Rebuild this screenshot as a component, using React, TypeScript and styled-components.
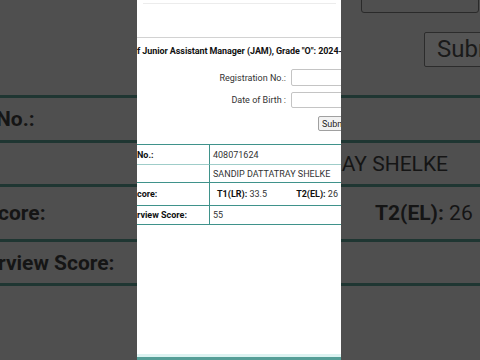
import React from "react";
import styled, { createGlobalStyle } from "styled-components";

const GlobalStyle = createGlobalStyle`
  html, body {
    margin: 0;
    padding: 0;
    background: #4f4f4f;
  }
`;

const TEAL = "#3f928b";
const DARK_TEAL = "#1f3632";

const Screen = styled.div`
  display: grid;
  grid-template-columns: 137px 204px 139px;
  width: 480px;
  height: 360px;
  overflow: hidden;
  background: #4f4f4f;
  font-family: Roboto, "Liberation Sans", sans-serif;
`;

const Backdrop = styled.div`
  display: flex;
  flex-direction: column;
  min-width: 0;
  overflow: hidden;
`;

const BackTop = styled.div`
  height: 95px;
  flex: none;
  border-bottom: 3px solid ${DARK_TEAL};
  display: flex;
  flex-direction: column;
  align-items: flex-start;
`;

const BackRow = styled.div<{ $h: number; $end?: number; $start?: number }>`
  height: ${(p) => p.$h}px;
  flex: none;
  border-bottom: 3px solid ${DARK_TEAL};
  display: flex;
  align-items: center;
  justify-content: ${(p) => (p.$end !== undefined ? "flex-end" : "flex-start")};
  padding-right: ${(p) => p.$end ?? 0}px;
  padding-left: ${(p) => p.$start ?? 0}px;
  white-space: nowrap;
  color: #151515;
  font-size: 21px;
`;

const BackLabel = styled.span<{ $shift?: number }>`
  margin-left: ${(p) => p.$shift ?? 0}px;
  font-weight: 700;
  font-size: 21px;
`;

const GhostInput = styled.div`
  margin: -9px 0 0 20px;
  width: 116px;
  height: 20px;
  flex: none;
  border: 1.5px solid #2a2a2a;
  border-radius: 3px;
`;

const GhostButton = styled.div`
  margin: 19px 0 0 83px;
  width: 70px;
  height: 35px;
  flex: none;
  box-sizing: border-box;
  border: 1.5px solid #2c2c2c;
  border-radius: 2px;
  background: #555;
  padding-left: 12px;
  font-size: 24px;
  line-height: 32px;
  color: #1a1a1a;
  white-space: nowrap;
  overflow: hidden;
`;

const Panel = styled.main`
  background: #fff;
  display: flex;
  flex-direction: column;
  min-width: 0;
  overflow: hidden;
`;

const TopBar = styled.div`
  height: 37px;
  flex: none;
  border-bottom: 1px solid #d2d2d2;
  padding: 0 5px 0 6px;
`;

const TopRule = styled.div`
  margin-top: 3px;
  border-top: 1px solid #ececec;
`;

const Heading = styled.h1`
  margin: 7px 0 0;
  font-size: 9px;
  line-height: 12px;
  font-weight: 700;
  letter-spacing: -0.08px;
  color: #111;
  white-space: nowrap;
`;

const FormRow = styled.div<{ $gap: number }>`
  display: flex;
  align-items: center;
  gap: 5px;
  margin-top: ${(p) => p.$gap}px;
  white-space: nowrap;
`;

const Label = styled.label`
  width: 149px;
  flex: none;
  text-align: right;
  font-size: 9px;
  color: #333;
`;

const Field = styled.input<{ $h: number }>`
  width: 110px;
  height: ${(p) => p.$h}px;
  flex: none;
  box-sizing: border-box;
  border: 1px solid #c4c4c4;
  border-radius: 2px;
  padding: 0;
  background: #fff;
`;

const SubmitButton = styled.button`
  margin: 8px 0 0 181px;
  width: 40px;
  height: 15px;
  flex: none;
  box-sizing: border-box;
  padding: 0 0 0 3px;
  text-align: left;
  border: 1px solid #a0a0a0;
  border-radius: 2px;
  background: #f2f2f2;
  font-family: inherit;
  font-size: 9px;
  color: #222;
  white-space: nowrap;
  overflow: hidden;
`;

const Table = styled.div`
  margin-top: 13px;
  display: grid;
  grid-template-columns: 73px 131px;
  border-top: 1px solid ${TEAL};
  flex: none;
`;

const Cell = styled.div<{ $h: number; $head?: boolean; $light?: boolean }>`
  height: ${(p) => p.$h}px;
  box-sizing: border-box;
  display: flex;
  align-items: center;
  gap: 3px;
  padding-left: ${(p) => (p.$head ? 0 : 3)}px;
  border-bottom: 1px solid ${(p) => (p.$light ? "#9fcdc9" : TEAL)};
  border-right: ${(p) => (p.$head ? `1px solid ${TEAL}` : "none")};
  font-size: 9px;
  font-weight: ${(p) => (p.$head ? 700 : 400)};
  color: ${(p) => (p.$head ? "#111" : "#333")};
  white-space: nowrap;
  overflow: hidden;
`;

const Score = styled.span<{ $push?: boolean }>`
  margin-left: ${(p) => (p.$push ? "auto" : "2px")};
  color: #333;
  b {
    color: #111;
  }
`;

const Footer = styled.div`
  margin-top: auto;
  height: 3px;
  flex: none;
  border-top: 3px solid #dcf3f1;
  background: #559e97;
`;

const rows = [
  { label: "No.:", value: "408071624", h: 20 },
  { label: "", value: "SANDIP DATTATRAY SHELKE", h: 18 },
];

export default function App() {
  return (
    <>
      <GlobalStyle />
      <Screen>
        <Backdrop>
          <BackTop />
          <BackRow $h={42}>
            <BackLabel $shift={-4}>No.:</BackLabel>
          </BackRow>
          <BackRow $h={41} />
          <BackRow $h={52}>
            <BackLabel $shift={-2}>core:</BackLabel>
          </BackRow>
          <BackRow $h={41}>
            <BackLabel $shift={-2}>rview Score:</BackLabel>
          </BackRow>
        </Backdrop>

        <Panel>
          <TopBar>
            <TopRule />
          </TopBar>
          <Heading>f Junior Assistant Manager (JAM), Grade "O": 2024-25</Heading>
          <FormRow $gap={12}>
            <Label>Registration No.:</Label>
            <Field $h={17} />
          </FormRow>
          <FormRow $gap={6}>
            <Label>Date of Birth :</Label>
            <Field $h={16} />
          </FormRow>
          <div>
            <SubmitButton>Submit</SubmitButton>
          </div>
          <Table>
            {rows.map((r, i) => (
              <React.Fragment key={r.value}>
                <Cell $h={r.h} $head $light={i === 0}>
                  {r.label}
                </Cell>
                <Cell $h={r.h} $light={i === 0}>
                  {r.value}
                </Cell>
              </React.Fragment>
            ))}
            <Cell $h={23} $head>
              core:
            </Cell>
            <Cell $h={23} style={{ paddingLeft: 5, paddingRight: 3 }}>
              <Score>
                <b>T1(LR):</b> 33.5
              </Score>
              <Score $push>
                <b>T2(EL):</b> 26
              </Score>
            </Cell>
            <Cell $h={19} $head>
              rview Score:
            </Cell>
            <Cell $h={19}>55</Cell>
          </Table>
          <Footer />
        </Panel>

        <Backdrop>
          <BackTop>
            <GhostInput />
            <GhostButton>Submit</GhostButton>
          </BackTop>
          <BackRow $h={42} />
          <BackRow $h={41} $end={32}>
            SANDIP DATTATRAY SHELKE
          </BackRow>
          <BackRow $h={52} $start={34}>
            <BackLabel>T2(EL):</BackLabel>&nbsp;26
          </BackRow>
          <BackRow $h={41} />
        </Backdrop>
      </Screen>
    </>
  );
}
